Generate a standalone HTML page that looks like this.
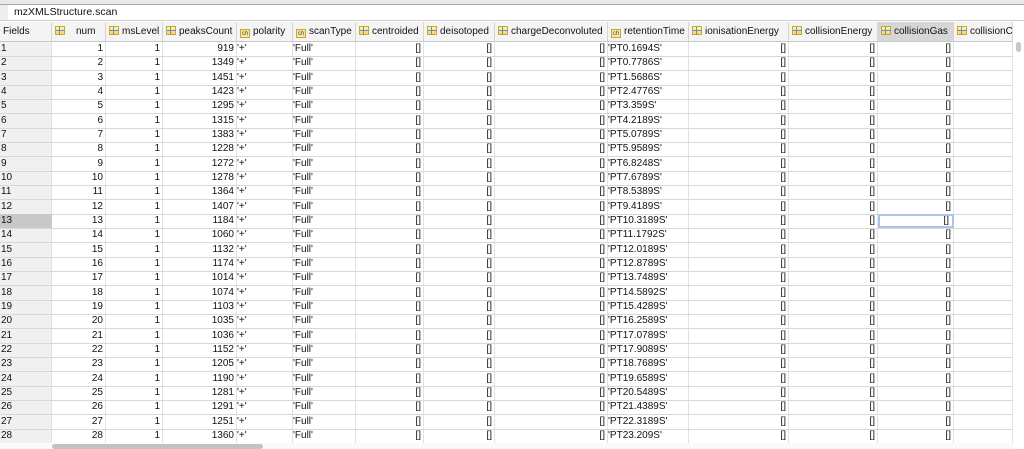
<!DOCTYPE html>
<html><head><meta charset="utf-8"><style>
body{margin:0;width:1024px;height:449px;background:#fff;overflow:hidden;font-family:"Liberation Sans",sans-serif;font-size:10px;color:#111;position:relative}
.top{position:absolute;left:0;top:0;width:1024px;height:4px;background:#e8e8e8;border-bottom:1px solid #a8a8a8}
.title{position:absolute;left:0;top:5px;height:15px;width:1024px;background:#fff;border-bottom:1px solid #ccc}
.title span{position:absolute;left:14px;top:1px;font-size:10.5px}
.title i{position:absolute;left:0;top:0;width:8px;height:15px;background:#eee}
.c{position:absolute;box-sizing:border-box;white-space:nowrap;overflow:hidden;line-height:14px}
.h{background:#f4f4f4;border-right:1px solid #d4d4d4;border-bottom:1px solid #c8c8c8;height:20px;line-height:19px;top:22px;font-size:10px}
.ic{display:inline-block;width:10px;height:9px;border:1px solid #c9a830;background:linear-gradient(#fff4b8,#f5d65a);vertical-align:-1px;margin:0 3px 0 3px;position:relative;box-sizing:border-box}
.ic:before{content:"";position:absolute;left:3px;top:0;width:1px;height:8px;background:#6b8fc4}
.ic:after{content:"";position:absolute;left:0;top:3px;width:9px;height:1px;background:#6b8fc4}
.ch{display:inline-block;width:10px;height:9px;border:1px solid #c9a830;background:#f8e8a0;font-size:6px;line-height:8px;color:#446;vertical-align:-1px;margin:0 3px 0 3px;text-align:center;box-sizing:border-box}
.r{text-align:right;padding-right:3px}
.row{position:absolute;left:0;width:1013px;border-bottom:1px solid #d8d8d8;box-sizing:border-box}
.vl{position:absolute;top:42px;width:1px;height:402px;background:#e2e2e2}
</style></head><body>
<div class="top"></div>
<div class="title"><i></i><span>mzXMLStructure.scan</span></div>
<div id="t"></div>
<div style="position:absolute;left:0;top:443px;width:1013px;height:6px;background:#fafafa"></div>
<div style="position:absolute;left:52px;top:444px;width:211px;height:5px;border-radius:3px;background:#c2c2c2"></div>
<div style="position:absolute;left:1016px;top:42px;width:5px;height:10px;border-radius:3px;background:#c8c8c8"></div>
<script>
var cols=[["Fields",0,52,0],["num",52,54,1],["msLevel",106,57,1],["peaksCount",163,74,1],["polarity",237,56,2],["scanType",293,63,2],["centroided",356,68,1],["deisotoped",424,71,1],["chargeDeconvoluted",495,113,1],["retentionTime",608,81,2],["ionisationEnergy",689,100,1],["collisionEnergy",789,89,1],["collisionGas",878,76,1],["collisionC",954,59,1]];
var pk=[919,1349,1451,1423,1295,1315,1383,1228,1272,1278,1364,1407,1184,1060,1132,1174,1014,1074,1103,1035,1036,1152,1205,1190,1281,1291,1251,1360];
var rt=["0.1694","0.7786","1.5686","2.4776","3.359","4.2189","5.0789","5.9589","6.8248","7.6789","8.5389","9.4189","10.3189","11.1792","12.0189","12.8789","13.7489","14.5892","15.4289","16.2589","17.0789","17.9089","18.7689","19.6589","20.5489","21.4389","22.3189","23.209"];
var h="";
cols.forEach(function(c,i){var bg=i==12?"background:#d6d6d6;":"";var ic=c[3]==0?"<span style='padding-left:3px'></span>":(c[3]==1?"<span class='ic'></span>":"<span class='ch'>ch</span>");
var t=c[0]=="num"?"<span style='padding-left:8px'>num</span>":c[0];
h+="<div class='c h' style='left:"+c[1]+"px;width:"+c[2]+"px;"+bg+"'>"+ic+t+"</div>";});
h+="<div class='c' style='left:1013px;top:22px;width:11px;height:20px;background:#fff'></div>";
h+="<div style='position:absolute;left:0;top:42px;width:52px;height:402px;background:#f0f0f0'></div>";
for(var k=1;k<cols.length;k++)h+="<div class='vl' style='left:"+(cols[k][1]-1)+"px'></div>";
h+="<div class='vl' style='left:1012px'></div>";
for(var i=0;i<28;i++){var y=Math.round(42+i*14.33);var n=i+1;
h+="<div class='row' style='top:"+y+"px;height:15px'></div>";
if(i==12)h+="<div class='c' style='left:0;top:"+y+"px;width:52px;height:14px;background:#c8c8c8'></div>";
var v=[n,n,1,pk[i],"'+'","'Full'","[]","[]","[]","'PT"+rt[i]+"S'","[]","[]","[]",""];
cols.forEach(function(c,j){var al=(j==0||j==4||j==5||j==9)?"":"r";var pl=j==0?"padding-left:1px;":"";
var ex="";if(i==12&&j==12)ex="border:2px solid #a9c6ea;line-height:10px;";
h+="<div class='c "+al+"' style='left:"+c[1]+"px;top:"+y+"px;width:"+c[2]+"px;height:14px;"+pl+ex+"'>"+v[j]+"</div>";});}
document.getElementById("t").innerHTML=h;
</script>
</body></html>
